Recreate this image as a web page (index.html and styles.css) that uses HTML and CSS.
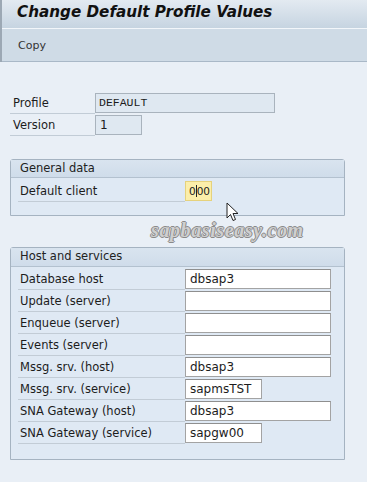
FILE: index.html
```html
<!DOCTYPE html>
<html lang="en">
<head>
    <meta charset="UTF-8">
    <title>Change Default Profile Values</title>
    <link rel="stylesheet" href="styles.css">
</head>
<body>
    <div class="head">
        <h1 class="title">Change Default Profile Values</h1>
        <div class="toolbar"><span class="tool">Copy</span></div>
    </div>

    <div class="content">
        <div class="row">
            <span class="label">Profile</span>
            <span class="box box-ro box-mono box-profile">DEFAULT</span>
        </div>
        <div class="row">
            <span class="label">Version</span>
            <span class="box box-ro box-version">1</span>
        </div>

        <div class="group group-general">
            <div class="group-head">General data</div>
            <div class="group-body">
                <div class="row">
                    <span class="label label-wide">Default client</span>
                    <span class="box box-focus">0<i class="caret"></i>00</span>
                </div>
            </div>
            <svg class="pointer" width="13" height="20" viewBox="0 0 13 20">
                <path d="M1 1 L1 16 L4.5 12.5 L7 18.5 L9.5 17.5 L7 11.5 L12 11.5 Z" fill="#fff" stroke="#222" stroke-width="1"/>
            </svg>
        </div>

        <div class="watermark">sapbasiseasy.com</div>

        <div class="group group-host">
            <div class="group-head">Host and services</div>
            <div class="group-body">
                <div class="row"><span class="label label-wide">Database host</span><span class="box box-long">dbsap3</span></div>
                <div class="row"><span class="label label-wide">Update (server)</span><span class="box box-long"></span></div>
                <div class="row"><span class="label label-wide">Enqueue (server)</span><span class="box box-long"></span></div>
                <div class="row"><span class="label label-wide">Events (server)</span><span class="box box-long"></span></div>
                <div class="row"><span class="label label-wide">Mssg. srv. (host)</span><span class="box box-long">dbsap3</span></div>
                <div class="row"><span class="label label-wide">Mssg. srv. (service)</span><span class="box box-short">sapmsTST</span></div>
                <div class="row"><span class="label label-wide">SNA Gateway (host)</span><span class="box box-long">dbsap3</span></div>
                <div class="row"><span class="label label-wide">SNA Gateway (service)</span><span class="box box-short">sapgw00</span></div>
            </div>
        </div>
    </div>
</body>
</html>
```

FILE: styles.css
```css
body {
    margin: 0;
    background-color: #e9eff6;
    color: #1c1c1c;
    font-family: "DejaVu Sans", Tahoma, sans-serif;
    font-size: 11px;
}

/* window header */
.head {
    border-left: 2px solid #9ca8b4;
}
.title {
    margin: 0;
    height: 28px;
    padding-left: 15px;
    line-height: 25px;
    font-size: 15.2px;
    font-weight: bold;
    font-style: italic;
    color: #111;
    background: linear-gradient(#e3eaf1, #c6d4e1);
    border-bottom: 1px solid #f2f6fa;
}
.toolbar {
    height: 32px;
    padding-left: 16px;
    background-color: #cfdbe6;
    border-bottom: 1px solid #a9b8c7;
    display: flex;
    align-items: center;
}
.tool {
    color: #333;
    font-size: 11px;
}

.content {
    padding: 30px 0 0 10px;
}

/* label + field rows */
.row {
    display: flex;
    align-items: center;
    height: 22px;
}
.label {
    width: 85px;
    height: 21px;
    line-height: 21px;
    padding-left: 3px;
    box-sizing: border-box;
    border-bottom: 1px solid #c2ccd6;
    font-size: 11.5px;
}
.label-wide {
    width: 167px;
    padding-left: 2px;
}
.box {
    box-sizing: border-box;
    height: 20px;
    line-height: 18px;
    padding-left: 4px;
    background-color: #fff;
    border: 1px solid #a3a3a3;
    border-top-color: #8f8f8f;
    font-size: 12px;
    white-space: nowrap;
}
.box-ro {
    background-color: #dfe8f1;
    border-color: #a9b3bd;
}
.box-mono {
    padding-left: 3px;
    font-family: "Liberation Mono", "Courier New", monospace;
    font-size: 11.5px;
}
.box-profile {
    width: 180px;
}
.box-version {
    width: 47px;
}
.box-focus {
    width: 27px;
    padding-left: 3px;
    background-color: #fbeeaa;
    border-color: #e6d27c;
    font-size: 10.5px;
}
.caret {
    display: inline-block;
    width: 1px;
    height: 12px;
    vertical-align: -2px;
    background-color: #222;
}
.box-long {
    width: 146px;
}
.box-short {
    width: 77px;
}

/* group boxes */
.group {
    position: relative;
    width: 335px;
    box-sizing: border-box;
    border: 1px solid #a5b3c1;
    border-radius: 3px 3px 0 0;
    background-color: #dfe9f4;
}
.group-general {
    margin-top: 23px;
    height: 57px;
}
.group-host {
    height: 213px;
}
.group-head {
    height: 17px;
    line-height: 16px;
    padding-left: 9px;
    background: linear-gradient(#d9e4ef, #cfdcea);
    border-bottom: 1px solid #b3c1cf;
    font-size: 11.5px;
    color: #222;
}
.group-host .group-head {
    height: 18px;
    line-height: 17px;
}
.group-body {
    padding: 2px 0 0 7px;
}
.group-host .group-body {
    padding-top: 1px;
}
.pointer {
    position: absolute;
    left: 215px;
    top: 42px;
}

.watermark {
    height: 31px;
    line-height: 28px;
    padding-left: 141px;
    font-family: "Liberation Serif", "Times New Roman", serif;
    font-style: italic;
    font-weight: bold;
    font-size: 20px;
    letter-spacing: 0.6px;
    color: #cfcfcf;
    text-shadow: -1px 0 #8a8a8a, 1px 0 #8a8a8a, 0 -1px #8a8a8a, 0 1px #8a8a8a;
}
```
